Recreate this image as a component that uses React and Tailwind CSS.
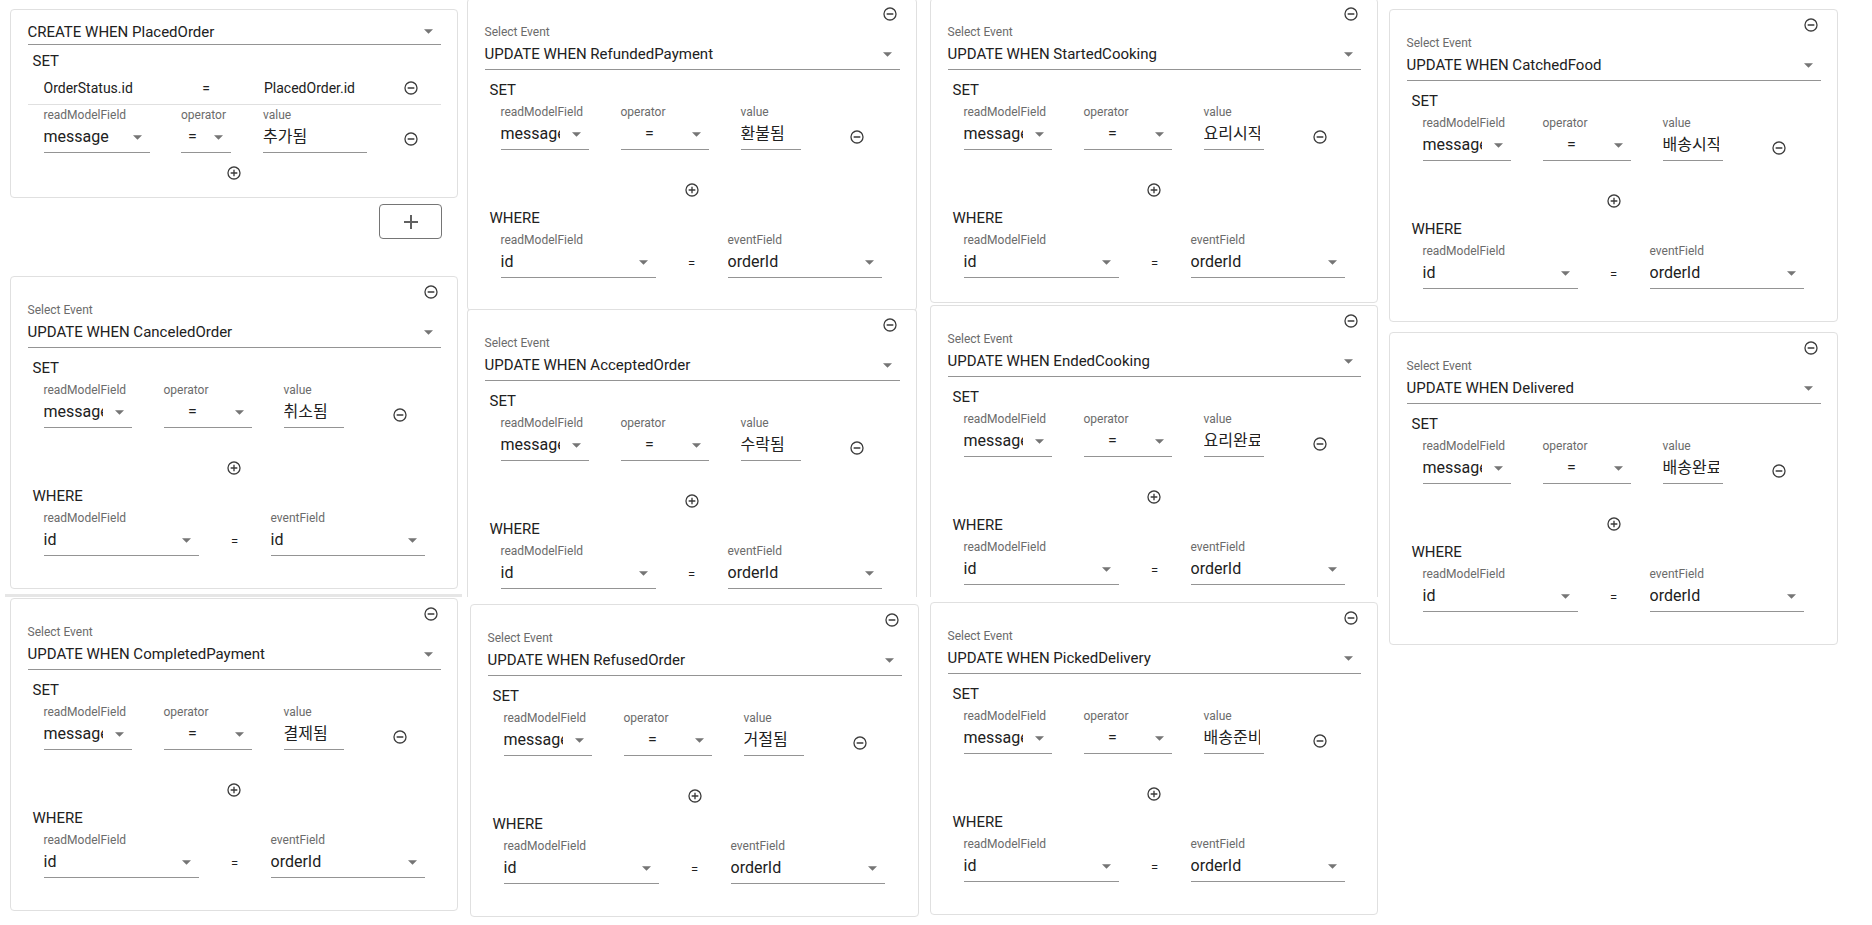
const FONT = "font-['Roboto','Noto_Sans_CJK_KR',sans-serif]";

const MinusIcon = ({ className = '' }) => (
    <svg width="16" height="16" viewBox="0 0 24 24" className={`shrink-0 ${className}`}>
        <path
            fill="#3a3a3a"
            d="M12,20C7.59,20 4,16.41 4,12C4,7.59 7.59,4 12,4C16.41,4 20,7.59 20,12C20,16.41 16.41,20 12,20M12,2A10,10 0 0,0 2,12A10,10 0 0,0 12,22A10,10 0 0,0 22,12A10,10 0 0,0 12,2M7,13H17V11H7"
        />
    </svg>
);

const PlusIcon = () => (
    <svg width="16" height="16" viewBox="0 0 24 24" className="shrink-0">
        <path
            fill="#3a3a3a"
            d="M12,20C7.59,20 4,16.41 4,12C4,7.59 7.59,4 12,4C16.41,4 20,7.59 20,12C20,16.41 16.41,20 12,20M12,2A10,10 0 0,0 2,12A10,10 0 0,0 12,22A10,10 0 0,0 22,12A10,10 0 0,0 12,2M13,7H11V11H7V13H11V17H13V13H17V11H13V7Z"
        />
    </svg>
);

const Caret = () => (
    <svg width="9" height="5" viewBox="7 10 10 5" className="shrink-0">
        <path fill="#757575" d="M7,10L12,15L17,10H7Z" />
    </svg>
);

const Field = ({ label, value, w, textW, center = false, caret = true }) => (
    <div className={`flex shrink-0 flex-col ${w}`}>
        <div className="whitespace-nowrap text-[12px] leading-[14px] text-[#6b6b6b]">{label}</div>
        <div className="flex h-[31px] items-center border-b border-[#949494]">
            <div
                className={`${textW} overflow-hidden whitespace-nowrap text-[16px] leading-[20px] text-[#212121] ${center ? 'text-center' : ''}`}
            >
                {value}
            </div>
            {caret && (
                <div className="flex flex-1 justify-end pr-[8px]">
                    <Caret />
                </div>
            )}
        </div>
    </div>
);

const EventSelect = ({ text }) => (
    <div className="pl-[16.5px] pr-[16px]">
        <div className="text-[12px] leading-[14px] text-[#6b6b6b]">Select Event</div>
        <div className="flex h-[31px] items-center border-b border-[#949494]">
            <div className="flex-1 whitespace-nowrap text-[15px] leading-[20px] text-[#212121]">{text}</div>
            <div className="pr-[8px]">
                <Caret />
            </div>
        </div>
    </div>
);

const UpdateCard = ({ event, value, where, className = '' }) => (
    <div className={`shrink-0 rounded-[4px] border border-[#e0e0e0] bg-white ${className}`}>
        <div className="flex h-[26px] justify-end pr-[18px] pt-[7px]">
            <MinusIcon />
        </div>
        <EventSelect text={event} />
        <div className="mt-[11px] pl-[21.5px] text-[15px] leading-[18px] text-[#212121]">SET</div>
        <div className="mt-[6px] flex pl-[32.5px]">
            <Field label="readModelField" value="message" w="w-[88px]" textW="w-[59px]" />
            <Field label="operator" value="=" w="w-[88px] ml-[32px]" textW="w-[58px]" center />
            <Field label="value" value={value} w="w-[60px] ml-[32px]" textW="w-[56px]" caret={false} />
            <MinusIcon className="ml-[48.5px] mt-[24px]" />
        </div>
        <div className="mt-[32px] flex justify-center">
            <PlusIcon />
        </div>
        <div className="mt-[11px] pl-[21.5px] text-[15px] leading-[18px] text-[#212121]">WHERE</div>
        <div className="mt-[6px] flex pl-[32.5px]">
            <Field label="readModelField" value="id" w="w-[155px]" textW="w-[120px]" />
            <div className="w-[72px] shrink-0 pt-[23px] text-center text-[13px] leading-[16px] text-[#212121]">=</div>
            <Field label="eventField" value={where} w="w-[154px]" textW="w-[120px]" />
        </div>
    </div>
);

const CreateCard = () => (
    <div className="mt-[9px] h-[189px] shrink-0 rounded-[4px] border border-[#e0e0e0] bg-white">
        <div className="ml-[16.5px] mr-[16px] mt-[9px] flex h-[26px] items-center border-b border-[#949494]">
            <div className="flex-1 whitespace-nowrap text-[15px] leading-[20px] text-[#212121]">CREATE WHEN PlacedOrder</div>
            <div className="pr-[8px]">
                <Caret />
            </div>
        </div>
        <div className="mt-[7px] pl-[21.5px] text-[15px] leading-[18px] text-[#212121]">SET</div>
        <div className="mt-[8px] flex h-[20px] items-center pl-[32.5px] text-[14px] text-[#212121]">
            <div className="w-[150px] shrink-0">OrderStatus.id</div>
            <div className="w-[25px] shrink-0 text-center">=</div>
            <div className="ml-[45.5px] w-[138.7px] shrink-0">PlacedOrder.id</div>
            <MinusIcon />
        </div>
        <div className="mx-[16.5px] mt-[6px] h-px bg-[#e0e0e0]" />
        <div className="mt-[3px] flex pl-[32.5px]">
            <Field label="readModelField" value="message" w="w-[106px]" textW="w-[72px]" />
            <Field label="operator" value="=" w="w-[50px] ml-[31.5px]" textW="w-[23px]" center />
            <Field label="value" value="추가됨" w="w-[104px] ml-[32px]" textW="w-[104px]" caret={false} />
            <MinusIcon className="ml-[35.7px] mt-[23px]" />
        </div>
        <div className="mt-[12px] flex justify-center">
            <PlusIcon />
        </div>
    </div>
);

export default function App() {
    return (
        <div className={`flex h-[925px] w-[1872px] items-start overflow-hidden bg-white ${FONT}`}>
            <div className="ml-[10px] flex w-[448px] shrink-0 flex-col">
                <CreateCard />
                <div className="mt-[6px] flex justify-end pr-[16px]">
                    <button className="flex h-[35px] w-[63px] items-center justify-center rounded-[4px] border border-[#757575] bg-white">
                        <svg width="24" height="24" viewBox="0 0 24 24">
                            <path fill="#616161" d="M19,13H13V19H11V13H5V11H11V5H13V11H19V13Z" />
                        </svg>
                    </button>
                </div>
                <UpdateCard className="mt-[37px] h-[313px]" event="UPDATE WHEN CanceledOrder" value="취소됨" where="id" />
                <div className="-ml-[5px] mt-[5px] h-[3px] w-[457px] bg-[#e6e6e6]" />
                <UpdateCard className="mt-[1px] h-[313px]" event="UPDATE WHEN CompletedPayment" value="결제됨" where="orderId" />
            </div>

            <div className="-mt-[2px] ml-[9px] flex w-[450px] shrink-0 flex-col">
                <UpdateCard className="h-[313px]" event="UPDATE WHEN RefundedPayment" value="환불됨" where="orderId" />
                <UpdateCard
                    className="-mt-[2px] h-[288px] overflow-hidden rounded-b-none border-b-0"
                    event="UPDATE WHEN AcceptedOrder"
                    value="수락됨"
                    where="orderId"
                />
                <UpdateCard className="ml-[3px] mt-[7px] h-[313px] w-[449px]" event="UPDATE WHEN RefusedOrder" value="거절됨" where="orderId" />
            </div>

            <div className="-mt-[2px] ml-[13px] flex w-[448px] shrink-0 flex-col">
                <UpdateCard className="h-[305px] overflow-hidden" event="UPDATE WHEN StartedCooking" value="요리시작" where="orderId" />
                <UpdateCard
                    className="mt-[2px] h-[292px] overflow-hidden rounded-b-none border-b-0"
                    event="UPDATE WHEN EndedCooking"
                    value="요리완료"
                    where="orderId"
                />
                <UpdateCard className="mt-[5px] h-[313px]" event="UPDATE WHEN PickedDelivery" value="배송준비" where="orderId" />
            </div>

            <div className="ml-[11px] flex w-[449px] shrink-0 flex-col">
                <UpdateCard className="mt-[9px] h-[313px]" event="UPDATE WHEN CatchedFood" value="배송시작" where="orderId" />
                <UpdateCard className="mt-[10px] h-[313px]" event="UPDATE WHEN Delivered" value="배송완료" where="orderId" />
            </div>
        </div>
    );
}
